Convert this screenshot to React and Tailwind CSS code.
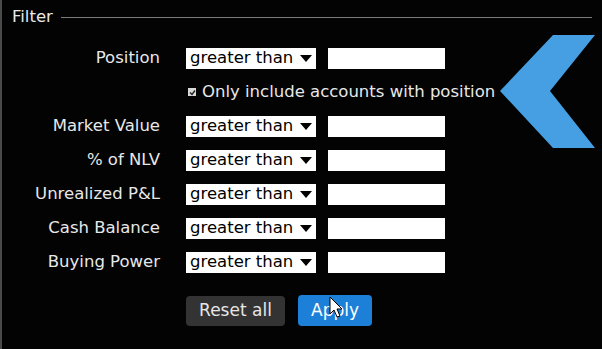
import React from "react";

const rows = [
  "Position",
  null,
  "Market Value",
  "% of NLV",
  "Unrealized P&L",
  "Cash Balance",
  "Buying Power",
];

function Select() {
  return (
    <div className="w-[130px] h-[21px] bg-white text-black flex items-center justify-between pl-[4px] pr-[4px]">
      <span className="leading-none">greater than</span>
      <svg width="12" height="7" viewBox="0 0 12 7">
        <polygon points="0,0 12,0 6,7" fill="#000" />
      </svg>
    </div>
  );
}

function FilterRow({ label }) {
  if (!label) {
    return (
      <div className="h-[34px] flex items-center">
        <div className="w-[158px]" />
        <div className="ml-[28px] flex items-center">
          <span className="w-[8px] h-[8px] bg-[#d8d8d8] flex items-center justify-center">
            <svg width="7" height="7" viewBox="0 0 7 7">
              <path d="M1 3.5 L3 5.5 L6 1.5" stroke="#222" strokeWidth="1.4" fill="none" />
            </svg>
          </span>
          <span className="ml-[6px]">Only include accounts with position</span>
        </div>
      </div>
    );
  }
  return (
    <div className="h-[34px] flex items-center">
      <div className="w-[158px] text-right whitespace-nowrap">{label}</div>
      <div className="ml-[26px]">
        <Select />
      </div>
      <div className="ml-[12px] w-[117px] h-[21px] bg-white" />
    </div>
  );
}

export default function App() {
  return (
    <div
      className="relative w-[602px] h-[349px] bg-[#030303] border-l-[2px] border-[#4a4a4a] overflow-hidden text-[16.5px] text-[#e8e8e8]"
      style={{ fontFamily: '"DejaVu Sans", Verdana, sans-serif' }}
    >
      <div className="h-[35px] flex items-center">
        <span className="ml-[10px]">Filter</span>
        <div className="flex-1 h-px bg-[#7a7a7a] ml-[8px] mr-[10px]" />
      </div>
      <div className="mt-[6px]">
        {rows.map((label, i) => (
          <FilterRow key={i} label={label} />
        ))}
      </div>
      <div className="mt-[17px] flex">
        <button className="ml-[184px] w-[99px] h-[30px] rounded-[4px] bg-[#333333] text-[#e6e6e6] text-[17px]">
          Reset all
        </button>
        <button className="ml-[13px] -mt-[1px] w-[74px] h-[31px] rounded-[4px] bg-[#1d80d8] text-white text-[17px]">
          Apply
        </button>
      </div>

      <svg
        className="absolute left-[496px] top-[34px]"
        width="100"
        height="116"
        viewBox="0 0 100 116"
      >
        <polygon points="55,1 97,1 52,57 97,114 55,114 2,57" fill="#459fe2" />
      </svg>

      <svg
        className="absolute left-[327px] top-[296px]"
        width="16"
        height="24"
        viewBox="0 0 16 24"
      >
        <path
          d="M1 1 L1 18 L5 14 L8 21 L11 20 L8 13 L13 13 Z"
          fill="#fff"
          stroke="#000"
          strokeWidth="1"
        />
      </svg>
    </div>
  );
}
